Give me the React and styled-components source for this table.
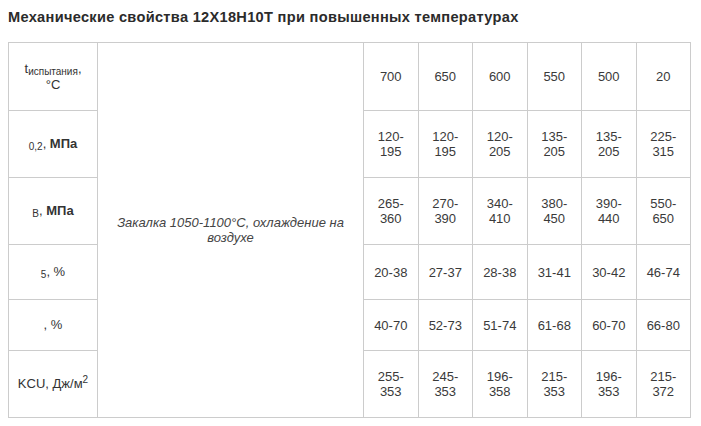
import styled, { createGlobalStyle } from "styled-components";

const GlobalStyle = createGlobalStyle`
  html, body {
    margin: 0;
    padding: 0;
    background: #ffffff;
  }
  body {
    font-family: "Liberation Sans", Arial, sans-serif;
    color: #333333;
  }
`;

const Page = styled.div`
  padding: 8px 0 0 8px;
  width: 701px;
  box-sizing: border-box;
`;

const Title = styled.h2`
  margin: 0 0 16px 0;
  font-size: 14.6px;
  line-height: 18px;
  letter-spacing: 0.3px;
  font-weight: bold;
  color: #2b2b2b;
`;

const Table = styled.table`
  border-collapse: collapse;
  table-layout: fixed;
  width: 682px;
  border: 1px solid #d4d4d4;
`;

const Cell = styled.td`
  border: 1px solid #cccccc;
  text-align: center;
  vertical-align: middle;
  font-size: 13px;
  line-height: 15px;
  color: #3a3a3a;
  padding: 0 4px;
`;

const Label = styled(Cell)`
  color: #333333;
  line-height: 16px;
`;

const Note = styled(Cell)`
  font-style: italic;
  color: #444444;
  padding: 0 8px;
`;

const Sub = styled.sub`
  font-size: 10px;
  vertical-align: -2px;
  line-height: 0;
`;

const Strong = styled.span`
  font-weight: bold;
`;

const Sup = styled.sup`
  font-size: 10px;
  vertical-align: 5px;
  line-height: 0;
`;

const Row = styled.tr`
  height: ${(p) => p.$h}px;
`;

const temps = ["700", "650", "600", "550", "500", "20"];

const rows = [
  {
    h: 67,
    label: (
      <>
        <Sub>0,2</Sub>, <Strong>МПа</Strong>
      </>
    ),
    values: ["120-195", "120-195", "120-205", "135-205", "135-205", "225-315"],
  },
  {
    h: 67,
    label: (
      <>
        <Sub>В</Sub>, <Strong>МПа</Strong>
      </>
    ),
    values: ["265-360", "270-390", "340-410", "380-450", "390-440", "550-650"],
  },
  {
    h: 55,
    label: (
      <>
        <Sub>5</Sub>, %
      </>
    ),
    values: ["20-38", "27-37", "28-38", "31-41", "30-42", "46-74"],
  },
  {
    h: 51,
    label: <>, %</>,
    values: ["40-70", "52-73", "51-74", "61-68", "60-70", "66-80"],
  },
  {
    h: 67,
    label: (
      <>
        KCU, Дж/м<Sup>2</Sup>
      </>
    ),
    values: ["255-353", "245-353", "196-358", "215-353", "196-353", "215-372"],
  },
];

function Value({ text, wrap }) {
  if (!wrap || !text.includes("-")) return text;
  const [a, b] = text.split("-");
  return (
    <>
      {a}-
      <br />
      {b}
    </>
  );
}

export default function App() {
  return (
    <Page>
      <GlobalStyle />
      <Title>Механические свойства 12Х18Н10Т при повышенных температурах</Title>
      <Table>
        <colgroup>
          <col style={{ width: 89 }} />
          <col style={{ width: 266 }} />
          {temps.map((t) => (
            <col key={t} style={{ width: 54.5 }} />
          ))}
        </colgroup>
        <tbody>
          <Row $h={68}>
            <Label>
              t<Sub>испытания</Sub>,
              <br />
              °С
            </Label>
            <Note rowSpan={6}>Закалка 1050-1100°С, охлаждение на воздухе</Note>
            {temps.map((t) => (
              <Cell key={t}>{t}</Cell>
            ))}
          </Row>
          {rows.map((r, i) => (
            <Row key={i} $h={r.h}>
              <Label>{r.label}</Label>
              {r.values.map((v, j) => (
                <Cell key={j}>
                  <Value text={v} wrap={r.h > 60} />
                </Cell>
              ))}
            </Row>
          ))}
        </tbody>
      </Table>
    </Page>
  );
}
